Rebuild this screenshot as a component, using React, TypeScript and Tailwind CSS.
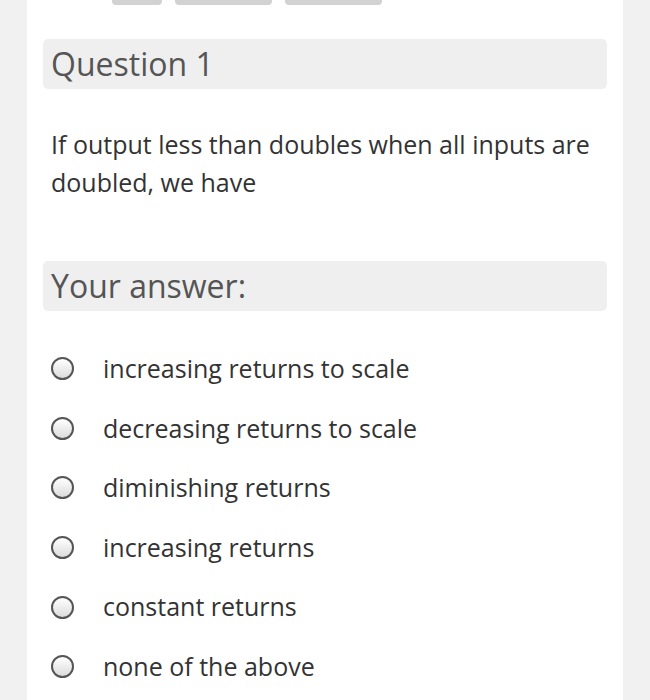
const OPTIONS = [
  "increasing returns to scale",
  "decreasing returns to scale",
  "diminishing returns",
  "increasing returns",
  "constant returns",
  "none of the above",
];

function Radio() {
  return (
    <span className="block h-[23px] w-[23px] shrink-0 rounded-full border-2 border-[#555] bg-gradient-to-b from-[#ffffff] to-[#dcdcdc]" />
  );
}

export default function App() {
  return (
    <div className="flex min-h-[700px] w-[650px] bg-[#f1f1f1] font-['Open_Sans',sans-serif]">
      <div className="ml-[27px] w-[596px] bg-white px-4">
        <div className="ml-[69px] flex gap-[13px]">
          <span className="h-[5px] w-[50px] rounded-b-[4px] bg-[#d2d2d2]" />
          <span className="h-[5px] w-[97px] rounded-b-[4px] bg-[#d2d2d2]" />
          <span className="h-[5px] w-[97px] rounded-b-[4px] bg-[#d2d2d2]" />
        </div>

        <div className="mt-[34px] flex h-[50px] items-center rounded-[5px] bg-[#efefef] px-2">
          <h2 className="text-[32px] leading-none text-[#555]">Question 1</h2>
        </div>

        <p className="mt-[36px] px-2 text-[25px] leading-[38px] text-[#333]">
          If output less than doubles when all inputs are doubled, we have
        </p>

        <div className="mt-[60px] flex h-[50px] items-center rounded-[5px] bg-[#efefef] px-2">
          <h3 className="text-[32px] leading-none text-[#555]">Your answer:</h3>
        </div>

        <div className="mt-[28px] px-2">
          {OPTIONS.map((option) => (
            <label key={option} className="flex h-[59.6px] items-center gap-[29px]">
              <Radio />
              <span className="text-[25px] text-[#333]">{option}</span>
            </label>
          ))}
        </div>
      </div>
    </div>
  );
}
